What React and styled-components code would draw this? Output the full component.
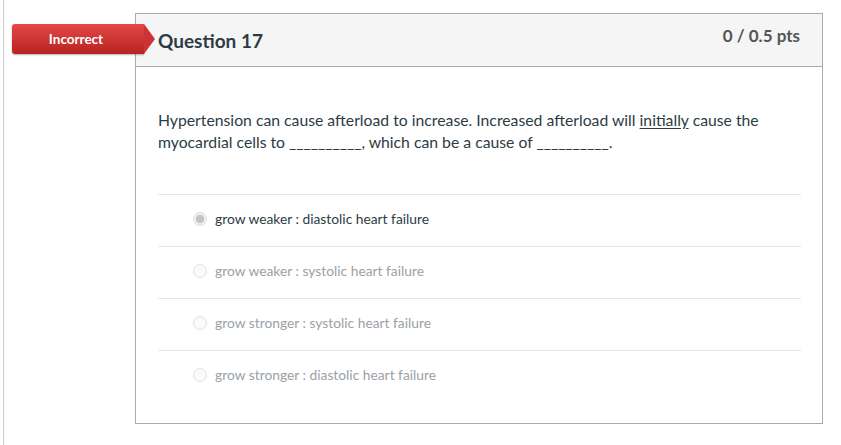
import React from "react";
import styled, { createGlobalStyle } from "styled-components";

const GlobalStyle = createGlobalStyle`
  html, body {
    margin: 0;
    padding: 0;
    background: #fff;
    font-family: Lato, "Liberation Sans", sans-serif;
  }
`;

const answers = [
  { text: "grow weaker : diastolic heart failure", selected: true },
  { text: "grow weaker : systolic heart failure" },
  { text: "grow stronger : systolic heart failure" },
  { text: "grow stronger : diastolic heart failure" },
];

const App = () => {
  return (
    <Page>
      <GlobalStyle />
      <Column>
        <Badge>Incorrect</Badge>
        <Card>
          <Header>
            <Title>Question 17</Title>
            <Points>0 / 0.5 pts</Points>
          </Header>
          <Body>
            <Prompt>
              Hypertension can cause afterload to increase. Increased afterload
              will <Under>initially</Under> cause the myocardial cells to
              __________, which can be a cause of __________.
            </Prompt>
            <Answers>
              {answers.map((a) => (
                <Answer key={a.text}>
                  <Radio $selected={a.selected} />
                  <AnswerText $selected={a.selected}>{a.text}</AnswerText>
                </Answer>
              ))}
            </Answers>
          </Body>
        </Card>
      </Column>
    </Page>
  );
};

export default App;

const Page = styled.div`
  width: 841px;
  height: 445px;
  box-sizing: border-box;
  padding-left: 3px;
  overflow: hidden;
`;

const Column = styled.div`
  position: relative;
  height: 445px;
  border-left: 1px solid #c7cdd1;
  padding: 13px 0 0 131px;
  box-sizing: border-box;
`;

const Badge = styled.div`
  position: absolute;
  left: 8px;
  top: 24px;
  width: 132px;
  height: 30px;
  box-sizing: border-box;
  padding-right: 4px;
  display: flex;
  align-items: center;
  justify-content: center;
  color: #fff;
  font-size: 13.5px;
  font-weight: bold;
  background: linear-gradient(#e44849, #b8221f);
  border-radius: 3px 0 0 3px;
  box-shadow: 0 1px 2px rgba(0, 0, 0, 0.3);
  z-index: 2;
  &::after {
    content: "";
    position: absolute;
    right: -11px;
    top: 0;
    border-top: 15px solid transparent;
    border-bottom: 15px solid transparent;
    border-left: 11px solid #cd3334;
  }
`;

const Card = styled.div`
  width: 688px;
  height: 411px;
  box-sizing: border-box;
  border: 1px solid #aaaaaa;
`;

const Header = styled.div`
  height: 53px;
  box-sizing: border-box;
  background: #f5f5f5;
  border-bottom: 1px solid #aaaaaa;
  display: flex;
  justify-content: space-between;
  align-items: flex-start;
  padding: 0 22px 0 22px;
`;

const Title = styled.h2`
  margin: 15px 0 0;
  font-size: 19px;
  font-weight: bold;
  color: #2d3b45;
`;

const Points = styled.div`
  margin-top: 11px;
  font-size: 17px;
  font-weight: bold;
  color: #555;
`;

const Body = styled.div`
  padding: 42px 21px 0 22px;
`;

const Prompt = styled.div`
  font-size: 15.75px;
  line-height: 22px;
  color: #2d3b45;
  padding-right: 20px;
`;

const Under = styled.span`
  text-decoration: underline;
  text-underline-offset: 2px;
`;

const Answers = styled.div`
  margin-top: 41px;
`;

const Answer = styled.div`
  height: 52px;
  box-sizing: border-box;
  border-top: 1px solid #e5e5e5;
  display: flex;
  align-items: center;
  padding: 0 0 4px 35px;
  gap: 8px;
`;

const Radio = styled.span`
  width: 14px;
  height: 14px;
  box-sizing: border-box;
  border-radius: 50%;
  border: 1px solid #e0e0e0;
  background: ${(p) =>
    p.$selected
      ? "radial-gradient(circle, #c4c4c4 0 4px, #efefef 4.5px)"
      : "#fafafa"};
`;

const AnswerText = styled.span`
  font-size: 13.8px;
  color: ${(p) => (p.$selected ? "#2d3b45" : "#9aa1a6")};
`;
